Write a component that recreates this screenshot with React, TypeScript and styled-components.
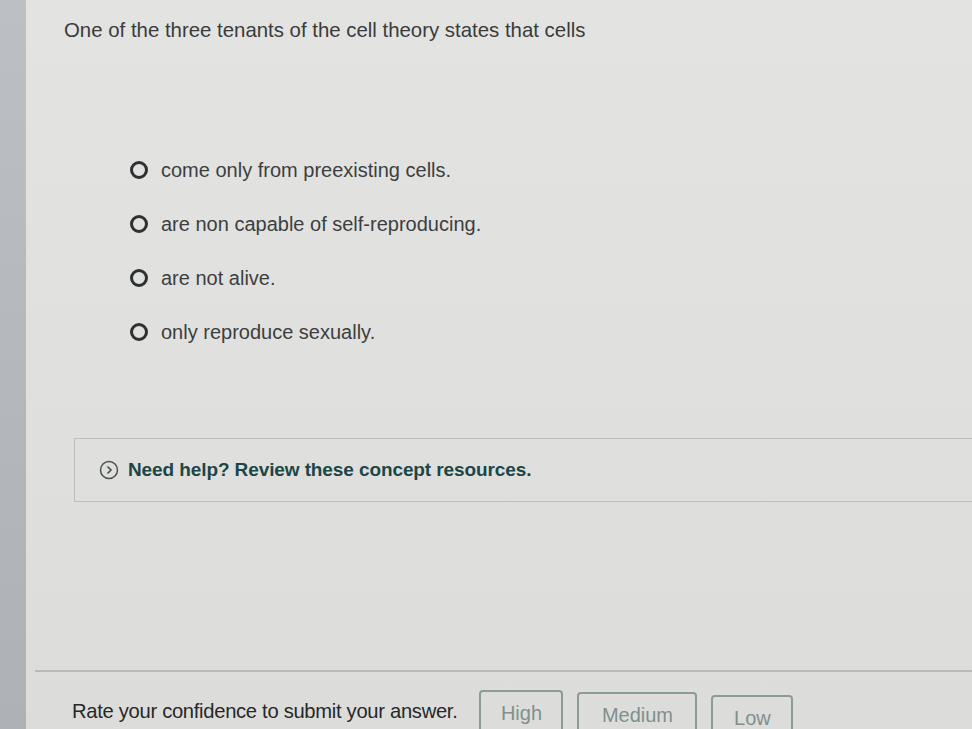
import React from 'react';
import styled, { createGlobalStyle } from 'styled-components';

const GlobalStyle = createGlobalStyle`
  html, body {
    margin: 0;
    padding: 0;
    height: 100%;
    overflow: hidden;
  }
  body {
    font-family: "Liberation Sans", Arial, sans-serif;
    background: #e1e2e0;
  }
`;

const Page = styled.div`
  display: flex;
  height: 729px;
  width: 972px;
  overflow: hidden;
`;

const SideStrip = styled.div`
  width: 26px;
  flex-shrink: 0;
  background: linear-gradient(180deg, #bcc0c4 0%, #b3b7bb 60%, #aeb2b6 100%);
`;

const Main = styled.div`
  flex: 1;
  display: flex;
  flex-direction: column;
  background: linear-gradient(180deg, #e3e4e2 0%, #e0e1df 50%, #dcdddb 100%);

  & > * {
    flex-shrink: 0;
  }
`;

const Question = styled.p`
  margin: 18px 0 0 38px;
  font-size: 20.4px;
  line-height: 24px;
  color: #3a3b3b;
`;

const OptionList = styled.div`
  margin: 101px 0 0 104px;
  display: flex;
  flex-direction: column;
`;

const OptionRow = styled.label`
  display: flex;
  align-items: center;
  gap: 13px;
  height: 54px;
  font-size: 20px;
  color: #3d3e3e;
  cursor: pointer;
`;

const Radio = styled.span`
  width: 12px;
  height: 12px;
  border: 3px solid #2e3131;
  border-radius: 50%;
  flex-shrink: 0;
`;

const HelpBox = styled.div`
  margin: 79px 0 0 48px;
  height: 64px;
  border: 1px solid #b9c0bd;
  border-right: none;
  display: flex;
  align-items: center;
  gap: 9px;
  padding-left: 24px;
  box-sizing: border-box;
`;

const HelpText = styled.span`
  font-size: 19px;
  font-weight: bold;
  color: #1d4646;
  letter-spacing: -0.1px;
`;

const Footer = styled.div`
  margin: 168px 0 0 9px;
  border-top: 2px solid #b6bbb9;
  display: flex;
  align-items: flex-start;
  padding: 18px 0 0 37px;
  gap: 14px;
`;

const FooterText = styled.span`
  font-size: 20.2px;
  color: #262828;
  margin-top: 10px;
  margin-right: 8px;
  letter-spacing: -0.3px;
  white-space: nowrap;
`;

const RateButton = styled.button<{ $width: number; $offset: number }>`
  width: ${p => p.$width}px;
  height: 46px;
  margin-top: ${p => p.$offset}px;
  background: transparent;
  border: 2px solid #8a9c98;
  border-radius: 4px;
  font-family: inherit;
  font-size: 20px;
  color: #80908d;
  padding: 0;
  flex-shrink: 0;
`;

const options = [
  'come only from preexisting cells.',
  'are non capable of self-reproducing.',
  'are not alive.',
  'only reproduce sexually.',
];

const ChevronCircle = () => (
  <svg width="20" height="20" viewBox="0 0 20 20">
    <circle cx="10" cy="10" r="8.5" fill="none" stroke="#4a4f4f" strokeWidth="1.5" />
    <path d="M8.5 6.5 L12 10 L8.5 13.5" fill="none" stroke="#4a4f4f" strokeWidth="1.6" />
  </svg>
);

const App: React.FC = () => {
  return (
    <Page>
      <GlobalStyle />
      <SideStrip />
      <Main>
        <Question>One of the three tenants of the cell theory states that cells</Question>
        <OptionList>
          {options.map(text => (
            <OptionRow key={text}>
              <Radio />
              {text}
            </OptionRow>
          ))}
        </OptionList>
        <HelpBox>
          <ChevronCircle />
          <HelpText>Need help? Review these concept resources.</HelpText>
        </HelpBox>
        <Footer>
          <FooterText>Rate your confidence to submit your answer.</FooterText>
          <RateButton $width={84} $offset={0}>High</RateButton>
          <RateButton $width={120} $offset={2}>Medium</RateButton>
          <RateButton $width={82} $offset={5}>Low</RateButton>
        </Footer>
      </Main>
    </Page>
  );
};

export default App;
